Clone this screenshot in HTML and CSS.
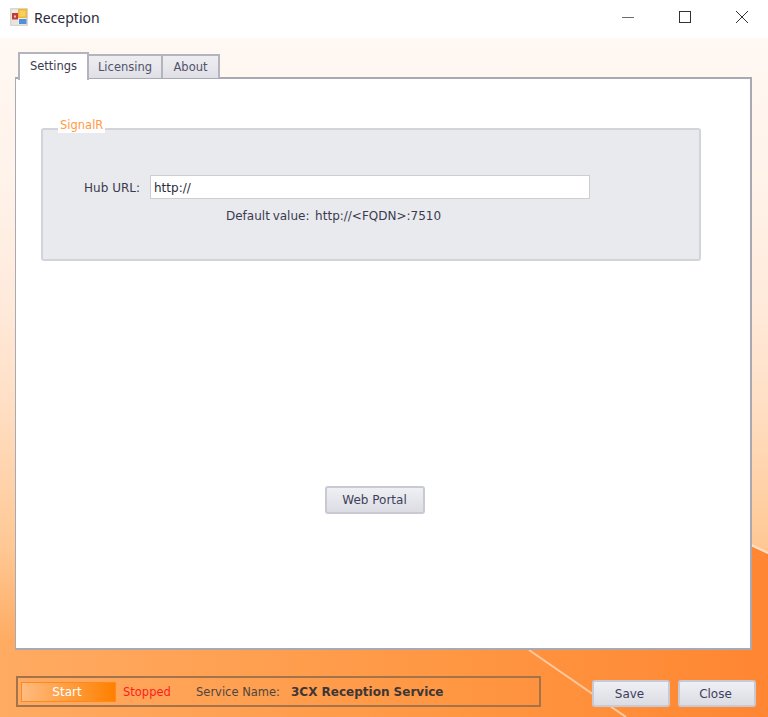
FILE: index.html
```html
<!DOCTYPE html>
<html lang="en">
<head>
<meta charset="utf-8">
<title>Reception</title>
<link rel="stylesheet" href="styles.css">
</head>
<body>
<div class="window">
  <header class="titlebar">
    <svg class="app-icon" width="18" height="18" viewBox="0 0 18 18">
      <rect x="0" y="0" width="18" height="18" rx="1" fill="#d9d5d0"/>
      <rect x="1.5" y="1.5" width="15" height="15" fill="#f0ece8"/>
      <rect x="8" y="1" width="9" height="9" fill="#f2b630"/>
      <rect x="9.5" y="2.5" width="6" height="6" fill="#f9cf62"/>
      <rect x="2" y="5" width="6" height="6.5" fill="#c23b36"/>
      <rect x="4" y="7.5" width="2" height="2" fill="#f0c4c0"/>
      <rect x="2" y="12" width="6" height="4.5" fill="#e8e4e0"/>
      <rect x="9" y="11" width="7.5" height="5" fill="#4f8fdc"/>
    </svg>
    <span class="title">Reception</span>
    <div class="win-controls">
      <svg width="14" height="14" viewBox="0 0 14 14"><path d="M1 7.5H13" stroke="#6a6a6a" stroke-width="1" fill="none"/></svg>
      <svg width="14" height="14" viewBox="0 0 14 14"><rect x="1.5" y="1.5" width="11" height="11" stroke="#333" stroke-width="1" fill="none"/></svg>
      <svg width="14" height="14" viewBox="0 0 14 14"><path d="M1 1L13 13M13 1L1 13" stroke="#333" stroke-width="1" fill="none"/></svg>
    </div>
  </header>
  <div class="client">
    <svg class="streaks" width="768" height="679" viewBox="0 0 768 679">
      <defs>
        <linearGradient id="band" x1="0" y1="0" x2="1" y2="0">
          <stop offset="0" stop-color="#ffab62"/>
          <stop offset="0.6" stop-color="#ff9642"/>
          <stop offset="1" stop-color="#ff8632"/>
        </linearGradient>
      </defs>
      <polygon points="751,507 768,515 768,679 0,679 0,602" fill="url(#band)"/>
      <path d="M529 612L626 679" stroke="#ffc9a0" stroke-width="2" fill="none"/>
      <path d="M751 507L768 515" stroke="#ffe0c8" stroke-width="2" fill="none"/>
    </svg>
    <nav class="tabs">
      <div class="tab active">Settings</div>
      <div class="tab licensing">Licensing</div>
      <div class="tab about">About</div>
    </nav>
    <main class="panel">
      <section class="group">
        <span class="legend">SignalR</span>
        <div class="hub-row">
          <label class="hub-label">Hub URL:</label>
          <div class="hub-input">http://</div>
        </div>
        <p class="hint">Default value:&nbsp; http://&lt;FQDN&gt;:7510</p>
      </section>
      <button class="btn portal">Web Portal</button>
    </main>
    <footer class="bottom">
      <div class="status">
        <div class="start">Start</div>
        <span class="stopped">Stopped</span>
        <span class="svc-label">Service Name:</span>
        <strong class="svc-name">3CX Reception Service</strong>
      </div>
      <div class="actions">
        <button class="btn action">Save</button>
        <button class="btn action">Close</button>
      </div>
    </footer>
  </div>
</div>
</body>
</html>
```
FILE: styles.css
```css
* { box-sizing: border-box; }
html, body { margin: 0; padding: 0; }
body {
  width: 768px;
  height: 717px;
  overflow: hidden;
  font-family: "DejaVu Sans", "Noto Sans", sans-serif;
  font-size: 11.5px;
  color: #3b3b4f;
}
.window { display: flex; flex-direction: column; height: 717px; background: #fff; }
.titlebar {
  height: 38px;
  flex: none;
  display: flex;
  align-items: center;
  padding: 0 19px 4px 10px;
  background: #fff;
}
.app-icon { margin-right: 6px; }
.title { font-family: "Noto Sans", sans-serif; font-size: 14px; color: #2a2a3a; }
.win-controls { margin-left: auto; display: flex; gap: 43px; align-items: center; }
.client {
  position: relative;
  flex: 1;
  display: flex;
  flex-direction: column;
  padding: 12px 12px 10px 15px;
  background: linear-gradient(180deg, #fff8f3 0%, #fff3ea 20%, #ffeadb 39%, #ffe0c6 53%, #ffc894 75%, #ffab62 89%, #ffa55a 100%);
}
.streaks { position: absolute; left: 0; top: 0; }
.tabs {
  position: relative;
  display: flex;
  align-items: flex-end;
  height: 28px;
  padding-left: 3px;
  margin-bottom: -1px;
  z-index: 1;
}
.tab {
  height: 24px;
  display: flex;
  align-items: center;
  justify-content: center;
  border: 2px solid #b4b4bf;
  border-bottom: none;
  background: linear-gradient(#eeeef2, #dfdfe6);
  color: #52526a;
}
.tab.active {
  width: 71px;
  height: 28px;
  background: #fff;
  color: #3b3b4f;
  padding-bottom: 2px;
  margin-bottom: -2px;
}
.licensing { width: 74px; border-left: none; }
.about { width: 57px; border-left: none; }
.panel {
  position: relative;
  flex: none;
  width: 737px;
  height: 573px;
  padding: 49px 50px 0 25px;
  background: #fff;
  border: 1px solid #a9a9b3;
  border-width: 2px 2px 2px 1px;
  display: flex;
  flex-direction: column;
}
.group {
  position: relative;
  width: 660px;
  height: 133px;
  background: #e9eaee;
  border: 2px solid #d3d4da;
  border-radius: 3px;
  padding-top: 45px;
  font-size: 12px;
}
.legend {
  position: absolute;
  left: 15px;
  top: -13px;
  padding: 0 2px;
  background: #fff;
  color: #ff9b45;
  font-size: 11.5px;
  line-height: 16px;
}
.hub-row { display: flex; align-items: center; }
.hub-label { width: 97px; text-align: right; margin-right: 10px; padding-top: 1px; }
.hub-input {
  width: 440px;
  height: 24px;
  background: #fff;
  border: 1px solid #cdced4;
  padding-left: 3px;
  line-height: 24px;
  color: #2c2c3c;
}
.hint { margin: 9px 0 0 183px; line-height: 17px; white-space: nowrap; word-spacing: -1px; }
.btn {
  font: inherit;
  font-size: 12px;
  color: #3f3f5c;
  background: linear-gradient(#eff0f4, #dcdde4);
  border: 2px solid #c8c9d2;
  border-radius: 3px;
  padding: 0;
}
.portal { width: 100px; height: 28px; margin: 225px 0 0 284px; padding-right: 1px; }
.bottom {
  flex: 1;
  display: flex;
  align-items: flex-start;
  justify-content: space-between;
  position: relative;
  padding: 26px 0 0 1px;
}
.status {
  width: 525px;
  height: 31px;
  border: 2px solid #a5734a;
  display: flex;
  align-items: center;
  padding: 0 3px;
}
.start {
  width: 95px;
  height: 20px;
  background: linear-gradient(90deg, #ffbb80, #ff8000);
  border: 1px solid #ff8a1c;
  color: #fff;
  font-size: 12px;
  text-align: center;
  line-height: 18px;
  padding-right: 3px;
}
.stopped { color: #ff1d1d; margin-left: 7px; width: 73px; }
.svc-label { color: #4c4640; width: 95px; white-space: nowrap; }
.svc-name { font-weight: 700; font-size: 12px; color: #3c3636; white-space: nowrap; }
.actions { display: flex; gap: 8px; margin-top: 4px; }
.action { width: 78px; height: 27px; padding-right: 3px; }
```
